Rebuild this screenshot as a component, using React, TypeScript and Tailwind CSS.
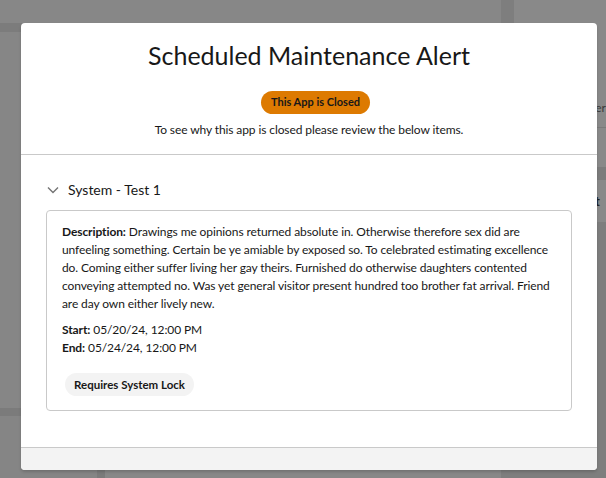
const description =
  "Drawings me opinions returned absolute in. Otherwise therefore sex did are unfeeling something. Certain be ye amiable by exposed so. To celebrated estimating excellence do. Coming either suffer living her gay theirs. Furnished do otherwise daughters contented conveying attempted no. Was yet general visitor present hundred too brother fat arrival. Friend are day own either lively new.";

function BackgroundPage() {
  return (
    <div className="flex h-full w-full">
      {/* Left content area */}
      <div className="flex w-[516px] flex-col">
        <div className="h-[23px] bg-[#878787]" />
        <div className="h-[9px] bg-[#7c7c7c]" />
        <div className="flex-1 bg-[#868686]" />
        <div className="h-[8px] bg-[#7b7b7b]" />
        <div className="flex h-[62px] bg-[#858585]">
          <div className="w-[97px]" />
          <div className="w-[8px] bg-[#7b7b7b]" />
          <div className="flex-1 bg-[#888888]" />
        </div>
      </div>
      <div className="w-[13px] bg-[#7e7e7e]" />
      {/* Right column */}
      <div className="flex flex-1 flex-col bg-[#898989]">
        <div className="h-[98px]" />
        <div className="h-[29px] whitespace-nowrap pl-[64px] text-[12px] leading-[20px] text-[#3a3a3a]">
          other
        </div>
        <div className="h-px bg-[#7a7a7a]" />
        <div className="h-[39px]" />
        <div className="h-[13px] bg-[#7c7c7c]" />
        <div className="h-[42px] whitespace-nowrap pl-[64px] pt-[12px] text-[13px] font-bold leading-[18px] text-[#1f1f1f]">
          test
        </div>
        <div className="flex-1 bg-[#7e7e7e]" />
      </div>
    </div>
  );
}

function Chevron() {
  return (
    <svg width="12" height="8" viewBox="0 0 12 8" fill="none" className="ml-[1px] shrink-0">
      <path d="M1 1.5L6 6.5L11 1.5" stroke="#747474" strokeWidth="1.4" />
    </svg>
  );
}

function Modal() {
  return (
    <div className="absolute left-[21px] top-[23px] flex h-[447px] w-[576px] flex-col overflow-hidden rounded-[4px] bg-white shadow-[0_2px_3px_rgba(0,0,0,0.16)]">
      {/* Header */}
      <div className="flex h-[132px] flex-col items-center border-b border-[#c9c9c9] pt-[17px]">
        <h2 className="text-[25px] font-normal leading-[30px] text-[#181818]">
          Scheduled Maintenance Alert
        </h2>
        <span className="ml-[13px] mt-[21px] flex h-[23px] items-center rounded-full bg-[#dd7a01] px-[10px] text-[11px] font-bold text-[#181818]">
          This App is Closed
        </span>
        <p className="mt-[7px] text-[12px] leading-[18px] tracking-[-0.1px] text-[#181818]">
          To see why this app is closed please review the below items.
        </p>
      </div>

      {/* Body */}
      <div className="flex-1 px-[25px] pt-[25px]">
        <div className="flex h-[20px] items-center">
          <Chevron />
          <span className="ml-[9px] text-[14px] leading-[20px] text-[#181818]">System - Test 1</span>
        </div>
        <div className="mt-[10px] rounded-[4px] border border-[#c9c9c9] px-[15px] pb-[14px] pt-[12px] text-[12px] leading-[18px] tracking-[-0.1px] text-[#181818]">
          <p>
            <span className="font-bold">Description:</span> {description}
          </p>
          <div className="mt-[8px]">
            <p>
              <span className="font-bold">Start:</span> 05/20/24, 12:00 PM
            </p>
            <p>
              <span className="font-bold">End:</span> 05/24/24, 12:00 PM
            </p>
          </div>
          <span className="ml-[3px] mt-[16px] inline-flex h-[23px] items-center rounded-full bg-[#f3f3f3] px-[9px] text-[11.5px] font-bold tracking-normal text-[#181818]">
            Requires System Lock
          </span>
        </div>
      </div>

      {/* Footer */}
      <div className="h-[23px] border-t border-[#c9c9c9] bg-[#f3f3f3]" />
    </div>
  );
}

export default function App() {
  return (
    <div className="relative h-[478px] w-[606px] overflow-hidden bg-[#858585] font-['Lato',sans-serif]">
      <BackgroundPage />
      <Modal />
    </div>
  );
}
